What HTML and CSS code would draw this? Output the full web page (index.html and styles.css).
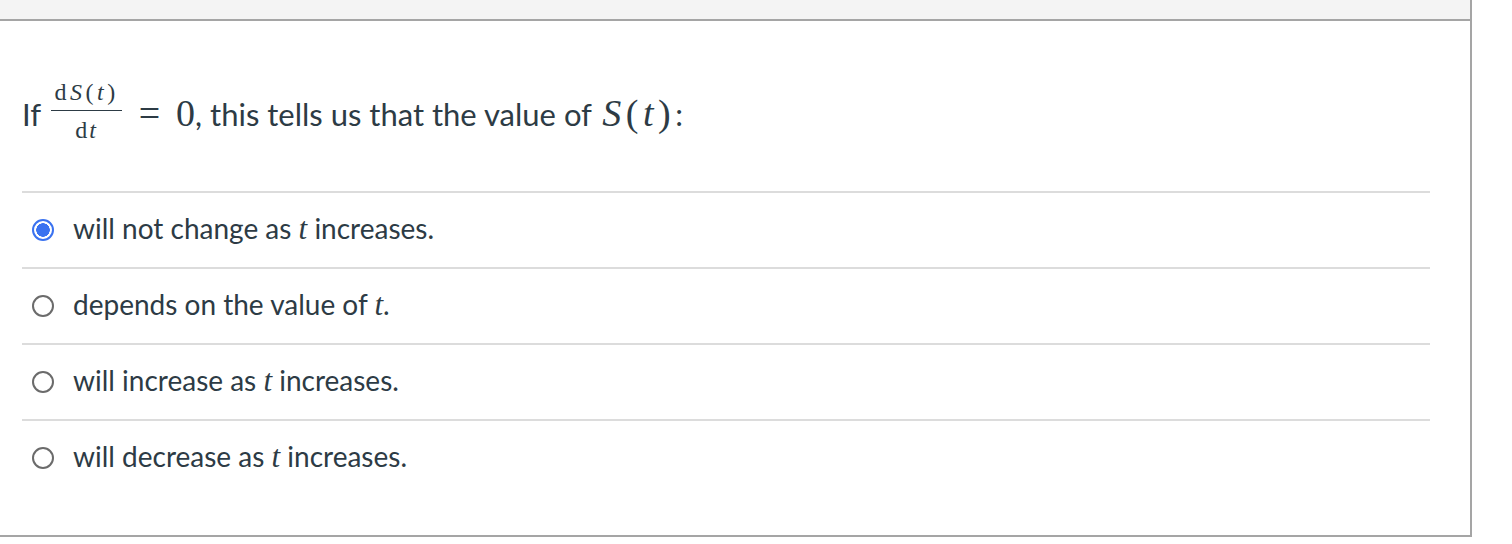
FILE: index.html
```html
<!DOCTYPE html>
<html>
<head>
<meta charset="utf-8">
<link rel="stylesheet" href="styles.css">
</head>
<body>
<div class="quiz">
  <div class="quiz-header"></div>
  <div class="quiz-body">
    <div class="question">
      <p class="qtext">If <span class="math"><span class="frac"><span class="num">d<i>S</i>(<i>t</i>)</span><span class="den">d<i>t</i></span></span><span class="rel">=</span>0</span>, this tells us that the value of <span class="math big"><i>S</i>(<i>t</i>)</span>:</p>
    </div>
    <div class="answers">
      <label class="answer"><span class="radio checked"></span><span>will not change as <span class="math"><i>t</i></span> increases.</span></label>
      <label class="answer"><span class="radio"></span><span>depends on the value of <span class="math"><i>t</i></span>.</span></label>
      <label class="answer"><span class="radio"></span><span>will increase as <span class="math"><i>t</i></span> increases.</span></label>
      <label class="answer"><span class="radio"></span><span>will decrease as <span class="math"><i>t</i></span> increases.</span></label>
    </div>
  </div>
</div>
</body>
</html>
```
FILE: styles.css
```css
html, body {
  margin: 0;
  padding: 0;
  background: #fff;
}
body {
  font-family: Lato, "Noto Sans", sans-serif;
  color: #2d3b45;
  font-size: 28px;
}
.quiz {
  width: 1470px;
  height: 535px;
  border-right: 2px solid #a5a5a5;
  border-bottom: 2px solid #a5a5a5;
}
.quiz-header {
  height: 19px;
  background: #f4f4f4;
  border-bottom: 2px solid #a5a5a5;
}
.quiz-body {
  padding: 0 40px 0 22px;
}
.question {
  height: 170px;
  display: flex;
  align-items: center;
  padding-top: 10px;
  box-sizing: border-box;
}
.qtext {
  margin: 0;
  line-height: 1.2;
  font-size: 31px;
}
.math {
  font-family: "Liberation Serif", "DejaVu Serif", serif;
  font-size: 38px;
}
.math.big {
  letter-spacing: 4.5px;
  margin-left: 3px;
}
.math i {
  font-style: italic;
}
.frac {
  display: inline-block;
  vertical-align: -12px;
  font-size: 24px;
  margin: 0 0 0 3px;
  text-align: center;
}
.num {
  display: block;
  padding: 0 3px 5px;
  border-bottom: 1.5px solid #2d3b45;
  line-height: 26px;
  letter-spacing: 3.5px;
}
.den {
  display: block;
  padding-top: 5px;
  line-height: 28px;
  letter-spacing: 2px;
}
.rel {
  margin: 0 16px 0 17px;
}
.answers {
  display: flex;
  flex-direction: column;
}
.answer {
  display: flex;
  align-items: center;
  border-top: 2px solid #dcdcdc;
  gap: 19px;
  padding-left: 10px;
  padding-bottom: 3px;
  box-sizing: border-box;
  height: 76px;
}
.answer .math {
  font-size: 31px;
}
.radio {
  width: 22px;
  height: 22px;
  border: 2px solid #6b6b6b;
  border-radius: 50%;
  flex: none;
  box-sizing: border-box;
  margin-top: 3px;
}
.radio.checked {
  border: 2.5px solid #3a72f0;
  background: radial-gradient(circle, #3a72f0 0 6.5px, #fff 7px);
}
```
